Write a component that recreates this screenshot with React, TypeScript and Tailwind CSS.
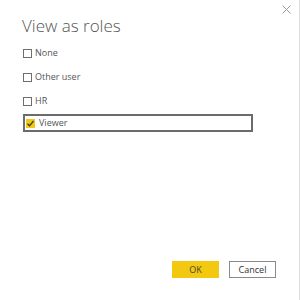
import { useState } from "react"

const ROLES = ["None", "Other user", "HR"]

function Box({ checked }: { checked?: boolean }) {
  if (checked) {
    return (
      <span className="flex h-[9px] w-[9px] items-center justify-center bg-[#f2c811]">
        <svg width="9" height="9" viewBox="0 0 9 9">
          <path d="M1.5 4.8 L3.5 6.8 L7.5 2" fill="none" stroke="#3b3a39" strokeWidth="1.3" />
        </svg>
      </span>
    )
  }
  return <span className="h-[9px] w-[9px] border-[1.5px] border-[#6e6e6e] bg-white" />
}

export default function App() {
  const [selected] = useState("Viewer")

  return (
    <div className="relative flex h-[300px] w-[300px] flex-col border-r border-[#dedede] bg-white font-['Open_Sans',sans-serif]">
      {/* close */}
      <button className="absolute right-[8px] top-[5px]">
        <svg width="9" height="9" viewBox="0 0 9 9">
          <path d="M0.5 0.5 L8.5 8.5 M8.5 0.5 L0.5 8.5" stroke="#9a9a9a" strokeWidth="1" />
        </svg>
      </button>

      <h1 className="pl-[22px] pt-[15px] text-[17px] font-light leading-[22px] text-[#555555]">View as roles</h1>

      <div className="mt-[4px] flex flex-col pl-[23px]">
        {ROLES.map((r) => (
          <div key={r} className="flex h-[24px] items-center gap-[2px]">
            <Box />
            <span className="ml-[1px] text-[9px] text-[#555555]">{r}</span>
          </div>
        ))}
        <div className="mt-[1px] flex h-[18px] w-[230px] items-center border-2 border-[#6b6b6b] pl-[1px]">
          <Box checked={selected === "Viewer"} />
          <span className="ml-[4px] text-[9px] text-[#555555]">Viewer</span>
        </div>
      </div>

      <div className="flex-1" />

      <div className="flex justify-end gap-[10px] pb-[22px] pr-[23px]">
        <button className="flex h-[17px] w-[47px] items-center justify-center bg-[#f2c811] text-[9px] text-[#4a4536]">OK</button>
        <button className="flex h-[17px] w-[47px] items-center justify-center border border-[#8a8a8a] bg-white text-[9px] text-[#333333]">Cancel</button>
      </div>
    </div>
  )
}
